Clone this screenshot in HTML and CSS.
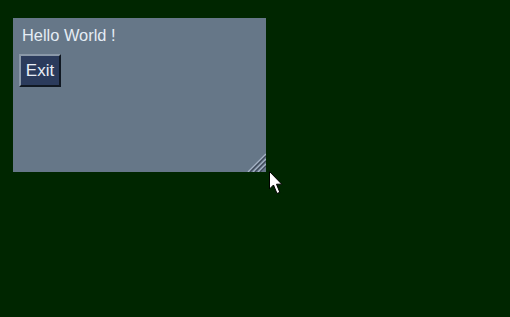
FILE: index.html
```html
<!DOCTYPE html>
<html>
<head>
<meta charset="utf-8">
<link rel="stylesheet" href="styles.css">
</head>
<body>
<div class="window">
  <div class="title">Hello World !</div>
  <button class="btn">Exit</button>
  <svg class="grip" width="20" height="20" viewBox="0 0 20 20">
    <g stroke="#a4b2c4" stroke-width="1.4">
      <line x1="20" y1="2" x2="2" y2="20"/>
      <line x1="20" y1="7" x2="7" y2="20"/>
      <line x1="20" y1="12" x2="12" y2="20"/>
    </g>
    <g stroke="#3e4858" stroke-width="1.2">
      <line x1="20" y1="4" x2="4" y2="20"/>
      <line x1="20" y1="9" x2="9" y2="20"/>
      <line x1="20" y1="14" x2="14" y2="20"/>
    </g>
  </svg>
</div>
<svg class="cursor" width="14" height="25" viewBox="0 0 14 25">
  <path d="M0.5 0.5 L0.5 18 L4.5 14 L8 22.5 L10.8 21.3 L7.5 13.2 L12.8 13.2 Z" fill="#fff" stroke="#000" stroke-width="1"/>
</svg>
</body>
</html>
```
FILE: styles.css
```css
html, body {
  margin: 0;
  padding: 0;
}
body {
  background: #002600;
  width: 510px;
  height: 317px;
  overflow: hidden;
  position: relative;
  font-family: "Liberation Sans", Arial, sans-serif;
}
.window {
  position: absolute;
  left: 13px;
  top: 18px;
  width: 253px;
  height: 154px;
  background: #667788;
  box-sizing: border-box;
  padding: 8px 6px;
}
.title {
  color: #e4ecf4;
  font-size: 16.4px;
  line-height: 18px;
  padding-left: 3px;
}
.btn {
  display: block;
  margin-top: 10px;
  width: 42px;
  height: 33px;
  padding: 0;
  background: #2b3b5c;
  color: #e8eef6;
  font-family: "Liberation Sans", Arial, sans-serif;
  font-size: 17px;
  border-style: solid;
  border-width: 2px;
  border-color: #8a98a8 #101822 #101822 #8a98a8;
  box-sizing: border-box;
}
.grip {
  position: absolute;
  right: 0;
  bottom: 0;
}
.cursor {
  position: absolute;
  left: 269px;
  top: 171px;
}
```
